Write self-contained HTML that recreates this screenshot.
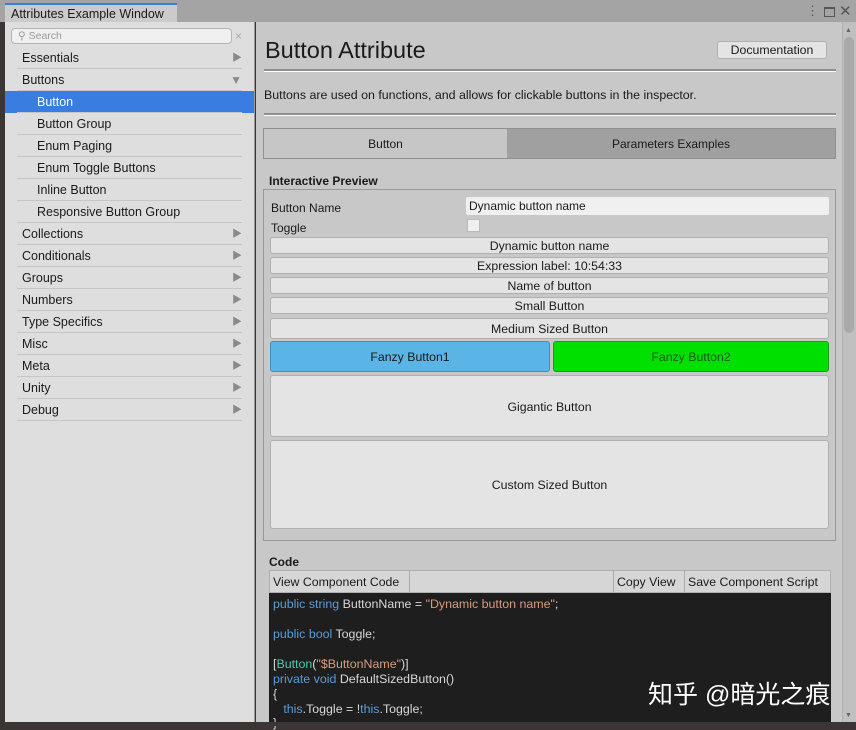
<!DOCTYPE html>
<html><head><meta charset="utf-8"><style>
*{margin:0;padding:0;box-sizing:border-box}
body{width:856px;height:726px;overflow:hidden;background:#3b3633;font-family:"Liberation Sans","Noto Sans CJK SC",sans-serif;font-size:12px;color:#1a1a1a;position:relative}
.a{position:absolute}
.li{position:absolute;left:5px;width:249px;height:22px;line-height:23px;padding-left:17px;font-size:12.5px}
.li.s{padding-left:32px}
.li:after{content:"";position:absolute;left:12px;right:12px;bottom:0;height:1px;background:#c6c6c6}
.ar{position:absolute;right:12px;top:0;color:#8a8a8a;font-size:10px}
.btn{position:absolute;left:270px;width:559px;background:#e4e4e4;border:1px solid #b0b0b0;border-radius:3px;text-align:center;font-size:12.3px}
.code{font-family:"Liberation Sans",sans-serif;font-size:12.4px;color:#d8d8d8;position:absolute;left:273px;white-space:pre}
.k{color:#5c9cd6}.st{color:#d69d7e}.g{color:#4ec9b0}
</style></head><body>
<div class="a" style="left:0;top:0;width:856px;height:22px;background:#a4a4a4"></div>
<div class="a" style="left:5px;top:3px;width:172px;height:19px;background:#cbcbcb;border-top:2px solid #3a7de0"></div>
<div class="a" style="left:11px;top:7px;font-size:12.5px">Attributes Example Window</div>
<div class="a" style="left:806px;top:3px;font-size:13px;color:#555">⋮</div>
<div class="a" style="left:824px;top:7px;width:11px;height:10px;border:1px solid #555;border-top-width:2px"></div>
<div class="a" style="left:839px;top:2px;font-size:15px;color:#555">✕</div>
<div class="a" style="left:5px;top:22px;width:250px;height:700px;background:#dedede;border-right:1px solid #9a9a9a"></div>
<div class="a" style="left:11px;top:28px;width:221px;height:16px;background:#f0f0f0;border:1px solid #b5b5b5;border-radius:4px;font-size:10.5px;color:#999;line-height:14px;padding-left:6px">⚲ Search</div>
<div class="a" style="left:235px;top:29px;color:#aaa;font-size:12px">×</div>
<div class="li" style="top:47px">Essentials<span class="ar">▶</span></div>
<div class="li" style="top:69px">Buttons<span class="ar" style="font-size:12px">▼</span></div>
<div class="li s" style="top:91px;background:#3a7de0;color:#fff">Button</div>
<div class="li s" style="top:113px">Button Group</div>
<div class="li s" style="top:135px">Enum Paging</div>
<div class="li s" style="top:157px">Enum Toggle Buttons</div>
<div class="li s" style="top:179px">Inline Button</div>
<div class="li s" style="top:201px">Responsive Button Group</div>
<div class="li" style="top:223px">Collections<span class="ar">▶</span></div>
<div class="li" style="top:245px">Conditionals<span class="ar">▶</span></div>
<div class="li" style="top:267px">Groups<span class="ar">▶</span></div>
<div class="li" style="top:289px">Numbers<span class="ar">▶</span></div>
<div class="li" style="top:311px">Type Specifics<span class="ar">▶</span></div>
<div class="li" style="top:333px">Misc<span class="ar">▶</span></div>
<div class="li" style="top:355px">Meta<span class="ar">▶</span></div>
<div class="li" style="top:377px">Unity<span class="ar">▶</span></div>
<div class="li" style="top:399px">Debug<span class="ar">▶</span></div>
<div class="a" style="left:256px;top:22px;width:586px;height:700px;background:#c8c8c8"></div>
<div class="a" style="left:842px;top:22px;width:14px;height:700px;background:#c0c0c0;border-left:1px solid #b0b0b0"></div>
<div class="a" style="left:845px;top:27px;font-size:7px;color:#666">▲</div>
<div class="a" style="left:844px;top:37px;width:10px;height:296px;background:#a9a9a9;border-radius:5px"></div>
<div class="a" style="left:845px;top:712px;font-size:7px;color:#666">▼</div>
<div class="a" style="left:265px;top:37px;font-size:23.5px">Button Attribute</div>
<div class="a" style="left:717px;top:41px;width:110px;height:18px;background:#e4e4e4;border:1px solid #b0b0b0;border-radius:3px;text-align:center;line-height:16px;font-size:12.3px">Documentation</div>
<div class="a" style="left:264px;top:69px;width:572px;height:3px;background:#8f8f8f;border-bottom:1px solid #fff"></div>
<div class="a" style="left:264px;top:88px;font-size:12.4px">Buttons are used on functions, and allows for clickable buttons in the inspector.</div>
<div class="a" style="left:264px;top:113px;width:572px;height:3px;background:#8f8f8f;border-bottom:1px solid #fff"></div>
<div class="a" style="left:263px;top:128px;width:573px;height:31px;border:1px solid #8f8f8f;background:#a0a0a0"></div>
<div class="a" style="left:264px;top:129px;width:243px;height:29px;background:#c6c6c6;text-align:center;line-height:31px">Button</div>
<div class="a" style="left:507px;top:129px;width:328px;height:29px;text-align:center;line-height:31px">Parameters Examples</div>
<div class="a" style="left:269px;top:174px;font-weight:bold;font-size:12px">Interactive Preview</div>
<div class="a" style="left:263px;top:189px;width:573px;height:352px;border:1px solid #999"></div>
<div class="a" style="left:271px;top:201px">Button Name</div>
<div class="a" style="left:466px;top:197px;width:363px;height:18px;background:#f0f0f0;border-radius:2px;padding-left:3px;line-height:19px">Dynamic button name</div>
<div class="a" style="left:271px;top:221px">Toggle</div>
<div class="a" style="left:467px;top:219px;width:13px;height:13px;background:#f0f0f0;border:1px solid #bbb"></div>
<div class="btn" style="top:237px;height:17px;line-height:16px">Dynamic button name</div>
<div class="btn" style="top:257px;height:17px;line-height:16px">Expression label: 10:54:33</div>
<div class="btn" style="top:277px;height:17px;line-height:16px">Name of button</div>
<div class="btn" style="top:297px;height:17px;line-height:16px">Small Button</div>
<div class="btn" style="top:318px;height:21px;line-height:20px">Medium Sized Button</div>
<div class="btn" style="top:341px;width:280px;height:31px;line-height:30px;background:#5ab4e6;border-color:#4a8db8">Fanzy Button1</div>
<div class="btn" style="left:553px;width:276px;top:341px;height:31px;line-height:30px;background:#00e000;border-color:#1a9a1a;color:#1b5a1b">Fanzy Button2</div>
<div class="btn" style="top:375px;height:62px;line-height:62px">Gigantic Button</div>
<div class="btn" style="top:440px;height:89px;line-height:89px">Custom Sized Button</div>
<div class="a" style="left:269px;top:555px;font-weight:bold">Code</div>
<div class="a" style="left:269px;top:570px;width:562px;height:23px;background:#d6d6d6;border:1px solid #b0b0b0"></div>
<div class="a" style="left:273px;top:575px;font-size:12.3px">View Component Code</div>
<div class="a" style="left:409px;top:570px;width:1px;height:23px;background:#aaa"></div>
<div class="a" style="left:613px;top:570px;width:1px;height:23px;background:#aaa"></div>
<div class="a" style="left:617px;top:575px;font-size:12.3px">Copy View</div>
<div class="a" style="left:684px;top:570px;width:1px;height:23px;background:#aaa"></div>
<div class="a" style="left:688px;top:575px;font-size:12.3px">Save Component Script</div>
<div class="a" style="left:269px;top:593px;width:562px;height:129px;background:#1e1e1e"></div>
<div class="code" style="top:597px"><span class="k">public string</span> ButtonName = <span class="st">"Dynamic button name"</span>;</div>
<div class="code" style="top:627px"><span class="k">public bool</span> Toggle;</div>
<div class="code" style="top:657px">[<span class="g">Button</span>(<span class="st">"$ButtonName"</span>)]</div>
<div class="code" style="top:672px"><span class="k">private void</span> DefaultSizedButton()</div>
<div class="code" style="top:687px">{</div>
<div class="code" style="top:702px">   <span class="k">this</span>.Toggle = !<span class="k">this</span>.Toggle;</div>
<div class="code" style="top:716px">}</div>
<div class="a" style="left:648px;top:675px;font-size:25px;color:#fff">知乎 @暗光之痕</div>
<div class="a" style="left:0;top:722px;width:856px;height:4px;background:#3b3633"></div>
</body></html>
